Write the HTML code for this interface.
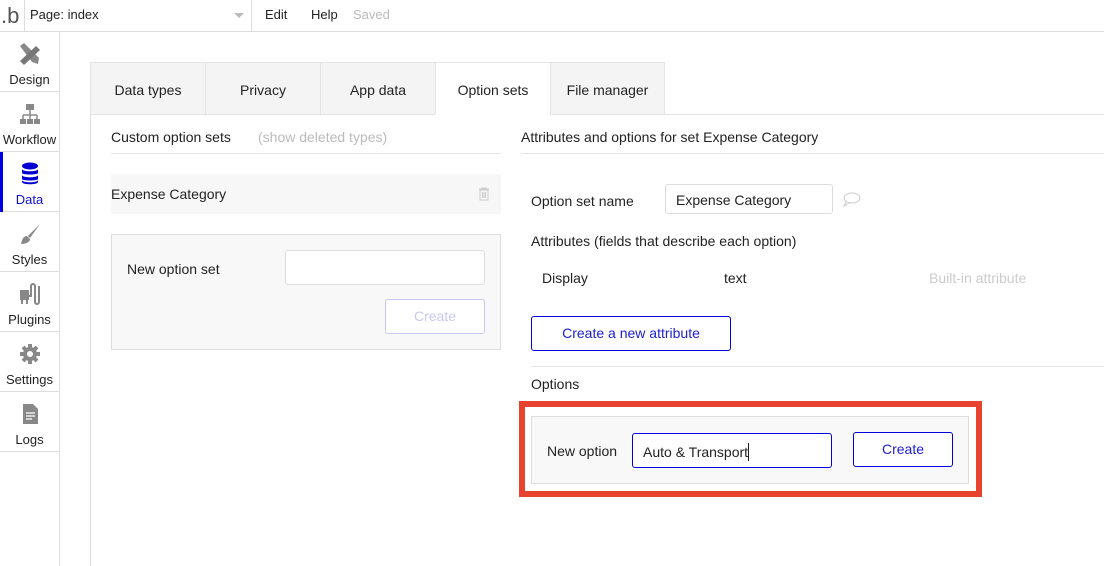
<!DOCTYPE html>
<html><head><meta charset="utf-8">
<style>
*{box-sizing:border-box;margin:0;padding:0}
body{width:1104px;height:566px;overflow:hidden;background:#fff;font-family:"Liberation Sans",sans-serif;font-size:14px;color:#222;position:relative}
.a{position:absolute}
.top{left:0;top:0;width:1104px;height:32px;border-bottom:1px solid #ddd;background:#fff}
.side{left:0;top:32px;width:60px;height:534px;border-right:1px solid #ddd}
.item{position:absolute;left:0;width:59px;height:60px;border-bottom:1px solid #ddd;text-align:center;font-size:13px;color:#222}
.item svg{position:absolute;left:19px;top:10px}
.item span{position:absolute;left:0;right:0;top:40px}
.tab{position:absolute;top:62px;height:53px;background:#f4f4f4;border:1px solid #e4e4e4;border-right:none;text-align:center;line-height:54px;color:#222}
.hr{position:absolute;height:1px;background:#e4e4e4}
.btn{position:absolute;border:1px solid #0000e0;border-radius:3px;color:#2020d0;text-align:center;background:#fff}
.inp{position:absolute;background:#fff;border:1px solid #ddd;border-radius:3px}
</style></head><body>
<div class="a top">
  <div class="a" style="left:1px;top:3px;font-size:22px;color:#555;line-height:26px">.b</div>
  <div class="a" style="left:24px;top:0;width:228px;height:32px;border-left:1px solid #ddd;border-right:1px solid #ddd"></div>
  <div class="a" style="left:30px;top:7px;font-size:13px">Page: index</div>
  <div class="a" style="left:234px;top:13px;width:0;height:0;border-left:5px solid transparent;border-right:5px solid transparent;border-top:5px solid #bbb"></div>
  <div class="a" style="left:265px;top:7px;font-size:13px">Edit</div>
  <div class="a" style="left:311px;top:7px;font-size:13px">Help</div>
  <div class="a" style="left:353px;top:7px;font-size:13px;color:#bbb">Saved</div>
</div>
<div class="a side">
  <div class="item" style="top:0"><svg width="22" height="24" viewBox="0 0 22 24"><path d="M1 4l4-3 15 15-1 6-6-2z" fill="#888"/><path d="M1 19l4 4 16-15-4-4z" fill="#777"/></svg><span>Design</span></div>
  <div class="item" style="top:60px"><svg width="22" height="24" viewBox="0 0 22 24"><rect x="7" y="2" width="8" height="6" fill="#888"/><path d="M11 8v5M4 13h14M4 13v4M11 13v4M18 13v4" stroke="#888" stroke-width="1.5" fill="none"/><rect x="1" y="17" width="6" height="5" fill="#888"/><rect x="8" y="17" width="6" height="5" fill="#888"/><rect x="15" y="17" width="6" height="5" fill="#888"/></svg><span>Workflow</span></div>
  <div class="item" style="top:120px"><div class="a" style="left:0;top:0;width:3px;height:60px;background:#0000e0"></div><svg width="22" height="24" viewBox="0 0 22 24"><ellipse cx="11" cy="4" rx="8" ry="3.5" fill="#0000d0"/><path d="M3 7v4c0 2 16 2 16 0V7c0 3-16 3-16 0zM3 13v4c0 2 16 2 16 0v-4c0 3-16 3-16 0zM3 18v2c0 3 16 3 16 0v-2c0 3-16 3-16 0z" fill="#0000d0"/></svg><span style="color:#1010d0">Data</span></div>
  <div class="item" style="top:180px"><svg width="22" height="24" viewBox="0 0 22 24"><path d="M21 2L9 14l2 2z" fill="#888"/><path d="M8 14c-4 0-5 4-6 8 5 0 9-2 9-5z" fill="#888"/></svg><span>Styles</span></div>
  <div class="item" style="top:240px"><svg width="22" height="24" viewBox="0 0 22 24"><rect x="1" y="8" width="9" height="10" fill="#888"/><path d="M3 18v4M8 18v4" stroke="#888" stroke-width="2"/><path d="M10 14h2V4a2 2 0 014 0v16a2 2 0 004 0V4" stroke="#888" stroke-width="2" fill="none"/></svg><span>Plugins</span></div>
  <div class="item" style="top:300px"><svg width="22" height="24" viewBox="0 0 22 24"><circle cx="11" cy="12" r="7" fill="#888"/><path d="M11 2v20M1 12h20M4 5l14 14M18 5L4 19" stroke="#888" stroke-width="4"/><circle cx="11" cy="12" r="3" fill="#fff"/></svg><span>Settings</span></div>
  <div class="item" style="top:360px"><svg width="22" height="24" viewBox="0 0 22 24"><path d="M4 2h10l5 5v15H4z" fill="#888"/><path d="M7 11h9M7 14h9M7 17h6" stroke="#fff" stroke-width="1.2"/></svg><span>Logs</span></div>
</div>
<div class="a" style="left:90px;top:115px;width:1px;height:451px;background:#ddd"></div>
<div class="tab" style="left:90px;width:115px">Data types</div>
<div class="tab" style="left:205px;width:115px">Privacy</div>
<div class="tab" style="left:320px;width:115px">App data</div>
<div class="tab" style="left:435px;width:115px;background:#fff;border-bottom-color:#fff">Option sets</div>
<div class="tab" style="left:550px;width:115px;border-right:1px solid #e4e4e4">File manager</div>
<div class="hr" style="left:665px;top:114px;width:439px"></div>

<div class="a" style="left:111px;top:129px">Custom option sets</div>
<div class="a" style="left:258px;top:129px;color:#bbb">(show deleted types)</div>
<div class="hr" style="left:111px;top:153px;width:390px"></div>
<div class="a" style="left:111px;top:174px;width:390px;height:40px;background:#f7f7f7"></div>
<div class="a" style="left:111px;top:186px">Expense Category</div>
<svg class="a" style="left:478px;top:187px" width="12" height="14" viewBox="0 0 12 14"><path d="M1 2h10M4 2V1h4v1M2 3h8v10H2z" stroke="#ccc" fill="none"/><path d="M4.5 5v6M6 5v6M7.5 5v6" stroke="#ccc"/></svg>
<div class="a" style="left:111px;top:234px;width:390px;height:116px;background:#f8f8f8;border:1px solid #ddd"></div>
<div class="a" style="left:127px;top:261px">New option set</div>
<div class="inp" style="left:285px;top:250px;width:200px;height:35px"></div>
<div class="btn" style="left:385px;top:299px;width:100px;height:35px;line-height:33px;border-color:#c8c8f4;color:#c8c8f4">Create</div>

<div class="a" style="left:521px;top:129px">Attributes and options for set Expense Category</div>
<div class="hr" style="left:521px;top:153px;width:583px"></div>
<div class="a" style="left:531px;top:193px">Option set name</div>
<div class="inp" style="left:665px;top:184px;width:168px;height:30px"></div>
<div class="a" style="left:676px;top:192px">Expense Category</div>
<svg class="a" style="left:842px;top:191px" width="20" height="16" viewBox="0 0 20 16"><ellipse cx="10" cy="7" rx="8" ry="5" stroke="#ccc" fill="none"/><path d="M4 11l-2 4 5-3" stroke="#ccc" fill="#fff"/></svg>
<div class="a" style="left:531px;top:233px">Attributes (fields that describe each option)</div>
<div class="a" style="left:542px;top:270px">Display</div>
<div class="a" style="left:724px;top:270px">text</div>
<div class="a" style="left:929px;top:270px;color:#ccc">Built-in attribute</div>
<div class="btn" style="left:531px;top:316px;width:200px;height:35px;line-height:33px">Create a new attribute</div>
<div class="hr" style="left:531px;top:366px;width:573px"></div>
<div class="a" style="left:531px;top:376px">Options</div>
<div class="a" style="left:519px;top:401px;width:463px;height:96px;border:6px solid #e8432f"></div>
<div class="a" style="left:531px;top:416px;width:438px;height:68px;background:#f8f8f8;border:1px solid #ddd"></div>
<div class="a" style="left:547px;top:443px">New option</div>
<div class="inp" style="left:632px;top:433px;width:200px;height:35px;border-color:#0000e0"></div>
<div class="a" style="left:643px;top:443px">Auto &amp; Transport<span style="display:inline-block;width:1px;height:18px;background:#222;vertical-align:-4px"></span></div>
<div class="btn" style="left:853px;top:432px;width:100px;height:35px;line-height:33px">Create</div>
</body></html>
